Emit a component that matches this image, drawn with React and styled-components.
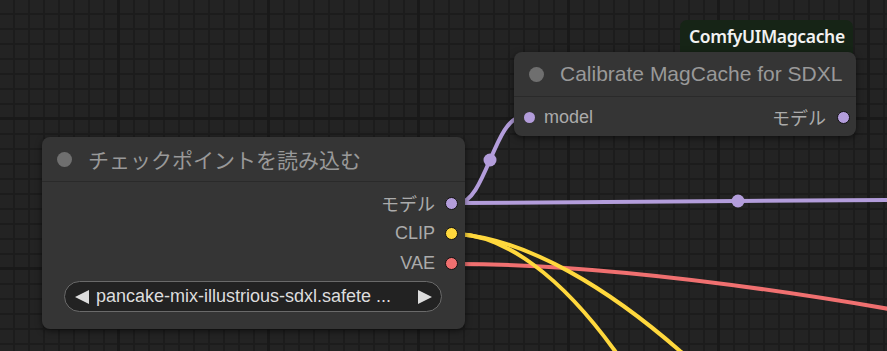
import React from "react";
import styled, { createGlobalStyle } from "styled-components";

const Global = createGlobalStyle`
  * { box-sizing: border-box; }
  html, body { margin: 0; padding: 0; background: #232323; }
  body { font-family: "Liberation Sans", Arial, "Noto Sans CJK JP", sans-serif; }
`;

const Canvas = styled.div`
  position: relative;
  width: 887px;
  height: 351px;
  overflow: hidden;
  background-color: #232323;
  background-image:
    linear-gradient(to right, #191919 3px, transparent 3px),
    linear-gradient(to bottom, #191919 3px, transparent 3px),
    linear-gradient(to right, #1c1c1c 2px, transparent 2px),
    linear-gradient(to bottom, #1c1c1c 2px, transparent 2px);
  background-size: 150px 150px, 150px 150px, 15px 15px, 15px 15px;
  background-position: 117px 117px, 117px 117px, 13px 13px, 13px 13px;
`;

const Links = styled.svg`
  position: absolute;
  inset: 0;
  width: 887px;
  height: 351px;
  z-index: 1;
`;

const Node = styled.div`
  position: absolute;
  left: ${(p) => p.$x}px;
  top: ${(p) => p.$y}px;
  width: ${(p) => p.$w}px;
  background: #353535;
  border-radius: 8px;
  box-shadow: 0 2px 6px rgba(0, 0, 0, 0.55);
  z-index: 3;
  display: flex;
  flex-direction: column;
`;

const Title = styled.div`
  height: 45px;
  display: flex;
  align-items: center;
  padding-left: 15px;
  gap: 16px;
  border-bottom: 1px solid #2a2a2a;
  color: #999;
  font-size: 21px;
  white-space: nowrap;
`;

const TitleDot = styled.span`
  width: 15px;
  height: 15px;
  border-radius: 50%;
  background: #6f6f6f;
  flex: none;
`;

const Body = styled.div`
  display: flex;
  flex-direction: column;
  padding: ${(p) => p.$pad};
`;

const Row = styled.div`
  height: 30px;
  display: flex;
  align-items: center;
  justify-content: space-between;
  font-size: 18px;
  color: #ababab;
`;

const Side = styled.div`
  display: flex;
  align-items: center;
  gap: ${(p) => p.$gap}px;
  padding: ${(p) => p.$pad};
`;

const Slot = styled.span`
  width: ${(p) => (p.$outline ? 13 : 11)}px;
  height: ${(p) => (p.$outline ? 13 : 11)}px;
  border-radius: 50%;
  background: ${(p) => p.$color};
  border: ${(p) => (p.$outline ? "1.5px solid #111" : "none")};
  flex: none;
`;

const Combo = styled.div`
  margin: 3px 23px 17px 22px;
  height: 31px;
  border-radius: 16px;
  background: #222;
  border: 1px solid #6a6a6a;
  display: flex;
  align-items: center;
  padding: 0 9px 0 10px;
  gap: 7px;
  color: #ddd;
  font-size: 18px;
`;

const ComboText = styled.span`
  flex: 1;
  white-space: nowrap;
  overflow: hidden;
`;

const Badge = styled.div`
  position: absolute;
  left: 680px;
  top: 20px;
  height: 34px;
  padding: 0 8px 0 9px;
  border-radius: 7px 7px 0 0;
  background: #162416;
  color: #f2f2f2;
  font-family: "Noto Sans", "Open Sans", sans-serif;
  font-weight: 600;
  font-size: 17.5px;
  line-height: 32px;
  letter-spacing: -0.35px;
  z-index: 2;
`;

const Arrow = ({ dir }) => (
  <svg width="14" height="14" viewBox="0 0 14 14" style={{ flex: "none" }}>
    {dir === "left" ? (
      <polygon points="14,0 14,14 0,7" fill="#ddd" />
    ) : (
      <polygon points="0,0 0,14 14,7" fill="#ddd" />
    )}
  </svg>
);

const MODEL = "#b39ddb";
const CLIP = "#ffd83d";
const VAE = "#f07070";

export default function App() {
  return (
    <>
      <Global />
      <Canvas>
        <Links viewBox="0 0 887 351">
          <g fill="none" strokeWidth="4" strokeLinecap="round">
            <path d="M458,203 C485,203 495,117 522,117" stroke={MODEL} />
            <path d="M458,203 C598,203 878,199 1018,199" stroke={MODEL} />
            <path d="M458,264 C620,264 820,294 1020,333" stroke={VAE} />
            <path d="M458,234 C505,236 560,275 615,351 L640,386" stroke={CLIP} />
            <path d="M458,234 C530,240 610,290 680,351 L720,382" stroke={CLIP} />
          </g>
          <circle cx="490" cy="160" r="6.5" fill={MODEL} />
          <circle cx="738" cy="201" r="6.5" fill={MODEL} />
        </Links>

        <Badge>ComfyUIMagcache</Badge>

        <Node $x={514} $y={52} $w={342}>
          <Title>
            <TitleDot />
            Calibrate MagCache for SDXL
          </Title>
          <Body $pad="5px 0 4px 0">
            <Row>
              <Side $gap={9} $pad="0 0 0 10px">
                <Slot $color={MODEL} />
                model
              </Side>
              <Side $gap={11} $pad="0 6px 0 0">
                モデル
                <Slot $color={MODEL} $outline />
              </Side>
            </Row>
          </Body>
        </Node>

        <Node $x={42} $y={137} $w={423}>
          <Title>
            <TitleDot />
            チェックポイントを読み込む
          </Title>
          <Body $pad="6px 0 0 0">
            <Row>
              <span />
              <Side $gap={10} $pad="0 7px 0 0">
                モデル
                <Slot $color={MODEL} $outline />
              </Side>
            </Row>
            <Row>
              <span />
              <Side $gap={10} $pad="0 7px 0 0">
                CLIP
                <Slot $color={CLIP} $outline />
              </Side>
            </Row>
            <Row>
              <span />
              <Side $gap={10} $pad="0 7px 0 0">
                VAE
                <Slot $color={VAE} $outline />
              </Side>
            </Row>
          </Body>
          <Combo>
            <Arrow dir="left" />
            <ComboText>pancake-mix-illustrious-sdxl.safete ...</ComboText>
            <Arrow dir="right" />
          </Combo>
        </Node>
      </Canvas>
    </>
  );
}
